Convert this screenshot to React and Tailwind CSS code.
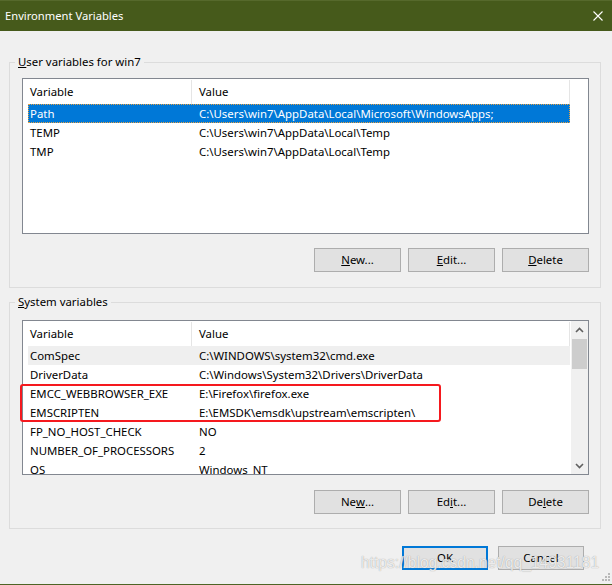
import React from 'react';

const userVars = [
  { name: 'Path', value: 'C:\\Users\\win7\\AppData\\Local\\Microsoft\\WindowsApps;' },
  { name: 'TEMP', value: 'C:\\Users\\win7\\AppData\\Local\\Temp' },
  { name: 'TMP', value: 'C:\\Users\\win7\\AppData\\Local\\Temp' },
];

const systemVars = [
  { name: 'ComSpec', value: 'C:\\WINDOWS\\system32\\cmd.exe' },
  { name: 'DriverData', value: 'C:\\Windows\\System32\\Drivers\\DriverData' },
  { name: 'EMCC_WEBBROWSER_EXE', value: 'E:\\Firefox\\firefox.exe' },
  { name: 'EMSCRIPTEN', value: 'E:\\EMSDK\\emsdk\\upstream\\emscripten\\' },
  { name: 'FP_NO_HOST_CHECK', value: 'NO' },
  { name: 'NUMBER_OF_PROCESSORS', value: '2' },
  { name: 'OS', value: 'Windows_NT' },
];

const Chevron = ({ up }) => (
  <svg width="9" height="6" viewBox="0 0 9 6">
    <path
      d={up ? 'M1 5 L4.5 1.5 L8 5' : 'M1 1 L4.5 4.5 L8 1'}
      fill="none"
      stroke="#606060"
      strokeWidth="1.6"
    />
  </svg>
);

const Btn = ({ children, primary, wide }) => {
  let cls = 'h-[24px] bg-[#e1e1e1] flex items-center justify-center';
  cls += wide ? ' w-[87px]' : ' w-[86px]';
  cls += primary ? ' border-2 border-[#0078d7]' : ' border border-[#adadad]';
  return <button className={cls}>{children}</button>;
};

const VarList = ({ rows, height, scroll, selected, hover }) => (
  <div className="flex bg-white border border-[#828790] overflow-hidden" style={{ height }}>
    <div className="w-[548px] overflow-hidden">
      <div className="flex h-[25px] pt-[1px]">
        <div className="w-[169px] border-r border-[#e5e5e5] pl-[7px] flex items-center">Variable</div>
        <div className="w-[378px] border-r border-[#e5e5e5] pl-[7px] flex items-center">Value</div>
      </div>
      {rows.map((r, i) => {
        let cls = 'ml-[5px] w-[542px] h-[19px] pt-[1px] flex items-center whitespace-nowrap';
        if (i === selected) cls += ' bg-[#0078d7] text-white outline outline-1 outline-dotted outline-[#e8a040] -outline-offset-1';
        else if (i === hover) cls += ' bg-[#efefef]';
        return (
          <div key={r.name} className={cls}>
            <div className="w-[164px] pl-[2px]">{r.name}</div>
            <div className="pl-[7px]">{r.value}</div>
          </div>
        );
      })}
    </div>
    <div className="flex-1" />
    {scroll && (
      <div className="w-[17px] bg-[#f0f0f0] flex flex-col">
        <div className="h-[17px] flex items-center justify-center">
          <Chevron up />
        </div>
        <div className="mt-[1px] mx-[1px] h-[30px] bg-[#cdcdcd]" />
        <div className="flex-1" />
        <div className="h-[17px] flex items-center justify-center">
          <Chevron />
        </div>
      </div>
    )}
  </div>
);

const App = () => {
  return (
    <div className="relative w-[612px] h-[585px] flex flex-col bg-[#f0f0f0] border-b border-[#4d6424] overflow-hidden font-['Noto_Sans',sans-serif] text-[11.4px] text-black select-none">
      <div className="h-[31px] shrink-0 bg-[#465a1b] border-t border-[#56692c] flex items-center justify-between pl-[5px] pr-[9px] text-white">
        <span className="text-[11.2px]">Environment Variables</span>
        <svg width="10" height="10" viewBox="0 0 10 10">
          <path d="M0.5 0.5 L9.5 9.5 M9.5 0.5 L0.5 9.5" stroke="#ffffff" strokeWidth="1.1" />
        </svg>
      </div>

      <div className="flex flex-col pt-[23px] pl-[9px] pr-[11px]">
        <fieldset className="border border-[#dcdcdc] pl-[12px] pr-[11px] pb-[15px]">
          <legend className="-ml-[7px] px-[3px] leading-[16px]">
            <span className="underline">U</span>ser variables for win7
          </legend>
          <div className="mt-[8px]">
            <VarList rows={userVars} height={156} selected={0} />
          </div>
          <div className="mt-[14px] flex justify-end gap-[7px]">
            <Btn wide><span className="underline">N</span>ew...</Btn>
            <Btn wide><span className="underline">E</span>dit...</Btn>
            <Btn wide><span className="underline">D</span>elete</Btn>
          </div>
        </fieldset>

        <fieldset className="mt-[6px] border border-[#dcdcdc] pl-[12px] pr-[11px] pb-[14px]">
          <legend className="-ml-[7px] px-[3px] leading-[16px]">
            <span className="underline">S</span>ystem variables
          </legend>
          <div className="mt-[10px]">
            <VarList rows={systemVars} height={155} scroll hover={0} />
          </div>
          <div className="mt-[15px] flex justify-end gap-[7px]">
            <Btn wide>Ne<span className="underline">w</span>...</Btn>
            <Btn wide>Ed<span className="underline">i</span>t...</Btn>
            <Btn wide>De<span className="underline">l</span>ete</Btn>
          </div>
        </fieldset>

        <div className="mt-[17px] mr-[17px] flex justify-end gap-[10px]">
          <Btn primary>OK</Btn>
          <Btn>Cancel</Btn>
        </div>
      </div>

      {/* annotation */}
      <div className="absolute left-[20px] top-[384px] w-[421px] h-[38px] border-2 border-[#f5191e] rounded-[3px]" />

      {/* watermark */}
      <div className="absolute left-[361px] top-[553px] font-['Liberation_Sans',sans-serif] text-[15.6px] leading-[20px] text-white/80 [text-shadow:0_0_1px_#8a8a8a]">
        https://blog.csdn.net/qq_14931181
      </div>

      {/* size grip */}
      <svg className="absolute right-[2px] bottom-[3px]" width="8" height="8" viewBox="0 0 8 8">
        <rect x="6" y="0" width="2" height="2" fill="#b8b8b8" />
        <rect x="3" y="3" width="2" height="2" fill="#b8b8b8" />
        <rect x="6" y="3" width="2" height="2" fill="#b8b8b8" />
        <rect x="0" y="6" width="2" height="2" fill="#b8b8b8" />
        <rect x="3" y="6" width="2" height="2" fill="#b8b8b8" />
        <rect x="6" y="6" width="2" height="2" fill="#b8b8b8" />
      </svg>
    </div>
  );
};

export default App;
